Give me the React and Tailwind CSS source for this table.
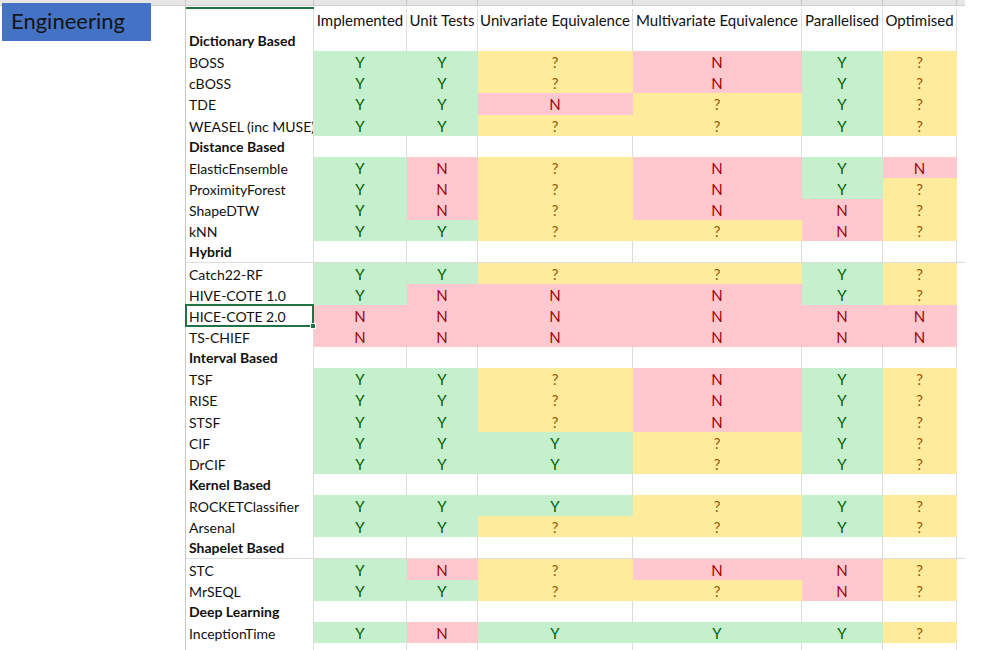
import React from "react";

const columns = [
  "Implemented",
  "Unit Tests",
  "Univariate Equivalence",
  "Multivariate Equivalence",
  "Parallelised",
  "Optimised",
];

const groups = [
  {
    name: "Dictionary Based",
    rows: [
      ["BOSS", "YY?NY?"],
      ["cBOSS", "YY?NY?"],
      ["TDE", "YYN?Y?"],
      ["WEASEL (inc MUSE)", "YY??Y?"],
    ],
  },
  {
    name: "Distance Based",
    rows: [
      ["ElasticEnsemble", "YN?NYN"],
      ["ProximityForest", "YN?NY?"],
      ["ShapeDTW", "YN?NN?"],
      ["kNN", "YY??N?"],
    ],
  },
  {
    name: "Hybrid",
    rows: [
      ["Catch22-RF", "YY??Y?"],
      ["HIVE-COTE 1.0", "YNNNY?"],
      ["HICE-COTE 2.0", "NNNNNN", true],
      ["TS-CHIEF", "NNNNNN"],
    ],
  },
  {
    name: "Interval Based",
    rows: [
      ["TSF", "YY?NY?"],
      ["RISE", "YY?NY?"],
      ["STSF", "YY?NY?"],
      ["CIF", "YYY?Y?"],
      ["DrCIF", "YYY?Y?"],
    ],
  },
  {
    name: "Kernel Based",
    rows: [
      ["ROCKETClassifier", "YYY?Y?"],
      ["Arsenal", "YY??Y?"],
    ],
  },
  {
    name: "Shapelet Based",
    rows: [
      ["STC", "YN?NN?"],
      ["MrSEQL", "YY??N?"],
    ],
  },
  {
    name: "Deep Learning",
    rows: [["InceptionTime", "YNYYY?"]],
  },
];

// flatten into sheet rows so each one knows its index (for row heights)
const sheetRows = [];
groups.forEach((g) => {
  sheetRows.push({ label: g.name, bold: true });
  g.rows.forEach(([label, values, selected]) => sheetRows.push({ label, values, selected }));
});
sheetRows.push({ label: "" });
sheetRows.push({ label: "" });

const fills = {
  Y: "bg-[#c6efce] border-[#c6efce] text-[#006100]",
  N: "bg-[#ffc7ce] border-[#ffc7ce] text-[#9c0006]",
  "?": "bg-[#ffeb9c] border-[#ffeb9c] text-[#9c5700]",
};

const cols = "grid grid-cols-[128px_93px_71px_155px_169px_81px_74px_8px]";
const plain = "border-r border-b border-[#dcdcdc] bg-white";

// 21.14px average row: one row in seven gets the extra pixel
function rowHeight(i) {
  return i % 7 === 3 ? "h-[22px]" : "h-[21px]";
}

function Row({ index, label, values, bold, selected }) {
  return (
    <div className={cols + " " + rowHeight(index)}>
      <div
        className={
          "relative flex items-center pl-[3px] whitespace-nowrap text-[14px] " +
          plain +
          (bold ? " font-bold" : "")
        }
      >
        <span className="block w-[124px] overflow-hidden">{label}</span>
        {selected ? (
          <div className="absolute -left-[1px] -top-[1px] w-[129px] h-[23px] border-2 border-[#217346] z-10">
            <div className="absolute -right-[4px] -bottom-[4px] w-[6px] h-[6px] bg-[#217346] border border-white" />
          </div>
        ) : null}
      </div>
      {values
        ? values.split("").map((v, i) => (
            <div
              key={i}
              className={"flex items-center justify-center border-r border-b " + fills[v]}
            >
              {v}
            </div>
          ))
        : columns.map((c) => <div key={c} className={plain} />)}
      <div className="border-b border-[#dcdcdc] bg-white" />
    </div>
  );
}

export default function App() {
  return (
    <div className="relative w-[981px] h-[650px] overflow-hidden bg-white font-['Lato',sans-serif] text-[15px] text-[#111]">
      {/* column header strip, mostly cut off */}
      <div className="flex h-[6px] w-[965px] bg-[#e6e6e6] border-b border-[#cfcfcf]">
        <div className="w-[186px] border-r border-[#c4c4c4]" />
        <div className="w-[128px] border-r border-[#c4c4c4]" />
        <div className="w-[93px] border-r border-[#c4c4c4]" />
        <div className="w-[71px] border-r border-[#c4c4c4]" />
        <div className="w-[155px] border-r border-[#c4c4c4]" />
        <div className="w-[169px] border-r border-[#c4c4c4]" />
        <div className="w-[81px] border-r border-[#c4c4c4]" />
        <div className="w-[74px] border-r border-[#c4c4c4]" />
      </div>

      <div className="ml-[185px] w-[780px] border-l border-[#c8c8c8]">
        <div className="flex h-[3px] items-end">
          <div className="w-[128px] h-[2px] bg-[#217346]" />
        </div>
        <div className={cols + " h-[21px]"}>
          <div className={plain} />
          {columns.map((c) => (
            <div key={c} className={"flex items-center justify-center whitespace-nowrap " + plain}>
              {c}
            </div>
          ))}
          <div className="border-b border-[#dcdcdc] bg-white" />
        </div>
        {sheetRows.map((r, i) => (
          <Row key={i} index={i} {...r} />
        ))}
      </div>

      {/* text box shape over the sheet */}
      <div className="absolute left-[2px] top-[3px] w-[149px] h-[38px] bg-[#4472c4] flex items-center pl-[9px] pb-[3px] text-[22px] text-[#141414]">
        Engineering
      </div>
    </div>
  );
}
